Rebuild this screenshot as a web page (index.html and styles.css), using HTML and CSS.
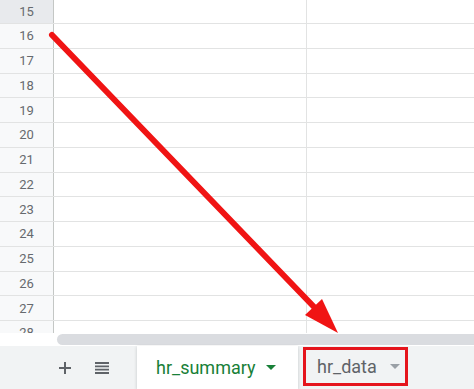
FILE: index.html
```html
<!DOCTYPE html>
<html lang="en">
<head>
  <meta charset="UTF-8" />
  <meta name="viewport" content="width=device-width, initial-scale=1.0">
  <title>Sheet tabs</title>
  <link rel="stylesheet" href="styles.css">
</head>
<body>

  <div class="sheet">
    <!-- Grid rows -->
    <div class="grid">
      <div class="row first selected"><div class="num">15</div><div class="cell"></div><div class="cell"></div></div>
      <div class="row"><div class="num">16</div><div class="cell"></div><div class="cell"></div></div>
      <div class="row"><div class="num">17</div><div class="cell"></div><div class="cell"></div></div>
      <div class="row"><div class="num">18</div><div class="cell"></div><div class="cell"></div></div>
      <div class="row"><div class="num">19</div><div class="cell"></div><div class="cell"></div></div>
      <div class="row"><div class="num">20</div><div class="cell"></div><div class="cell"></div></div>
      <div class="row"><div class="num">21</div><div class="cell"></div><div class="cell"></div></div>
      <div class="row"><div class="num">22</div><div class="cell"></div><div class="cell"></div></div>
      <div class="row"><div class="num">23</div><div class="cell"></div><div class="cell"></div></div>
      <div class="row"><div class="num">24</div><div class="cell"></div><div class="cell"></div></div>
      <div class="row"><div class="num">25</div><div class="cell"></div><div class="cell"></div></div>
      <div class="row"><div class="num">26</div><div class="cell"></div><div class="cell"></div></div>
      <div class="row"><div class="num">27</div><div class="cell"></div><div class="cell"></div></div>
      <div class="row"><div class="num">28</div><div class="cell"></div><div class="cell"></div></div>
    </div>

    <!-- Horizontal scrollbar -->
    <div class="scroll">
      <div class="scroll-corner"></div>
      <div class="thumb"></div>
    </div>

    <!-- Sheet tabs bar -->
    <div class="tabbar">
      <div class="tools">
        <span class="tool">
          <svg width="14" height="14" viewBox="0 0 14 14"><path d="M7 1v12M1 7h12" stroke="#5f6368" stroke-width="2"/></svg>
        </span>
        <span class="tool">
          <svg width="14" height="12" viewBox="0 0 14 12"><path d="M0 1h14M0 4.3h14M0 7.6h14M0 11h14" stroke="#5f6368" stroke-width="1.8"/></svg>
        </span>
      </div>
      <div class="tab active">hr_summary <span class="caret"></span></div>
      <div class="tab marked">hr_data <span class="caret"></span></div>
    </div>

    <!-- Annotation arrow -->
    <svg class="arrow" width="474" height="389" viewBox="0 0 474 389">
      <line x1="52" y1="35" x2="316" y2="309" stroke="#f01414" stroke-width="6" stroke-linecap="round"/>
      <polygon points="338,333 305,315 322,299" fill="#f01414"/>
    </svg>
  </div>

</body>
</html>
```

FILE: styles.css
```css
body {
  margin: 0;
  font-family: Roboto, "Liberation Sans", Arial, sans-serif;
  background: #fff;
}

.sheet {
  position: relative;
  width: 474px;
  height: 389px;
  overflow: hidden;
}

.grid {
  height: 333px;
  overflow: hidden;
}

.row {
  display: flex;
  height: 24.75px;
  box-sizing: border-box;
  border-bottom: 1px solid #e2e3e3;
}

.row.first {
  height: 24px;
}

.num {
  width: 53px;
  flex: none;
  background: #f8f9fa;
  border-right: 1px solid #c4c7c5;
  color: #666a6e;
  font-size: 13px;
  display: flex;
  align-items: center;
  justify-content: center;
}

.row.selected .num {
  background: #e8eaed;
}

.cell {
  width: 252px;
  flex: none;
  border-right: 1px solid #e2e3e3;
}

.cell + .cell {
  width: auto;
  flex: 1;
  border-right: none;
}

.scroll {
  display: flex;
  height: 13px;
  align-items: center;
  background: #fff;
}

.scroll-corner {
  width: 57px;
  flex: none;
}

.thumb {
  flex: 1;
  height: 11px;
  background: #dadce0;
  border-radius: 6px 0 0 6px;
}

.tabbar {
  display: flex;
  align-items: stretch;
  height: 43px;
  background: #f1f3f4;
}

.tools {
  width: 137px;
  flex: none;
  display: flex;
  align-items: center;
  padding-left: 57px;
  box-sizing: border-box;
  gap: 21px;
}

.tool {
  display: flex;
  align-items: center;
  justify-content: center;
  width: 16px;
}

.tab {
  display: flex;
  align-items: center;
  font-size: 18px;
  color: #5f6368;
  box-sizing: border-box;
}

.tab.active {
  width: 161px;
  background: #fff;
  color: #188038;
  padding-left: 19px;
  box-shadow: 0 1px 3px rgba(60,64,67,0.25);
}

.tab.marked {
  margin: 1px 0 3px 5px;
  width: 105px;
  border: 3px solid #e5141c;
  padding-left: 11px;
}

.caret {
  display: inline-block;
  margin-left: 11px;
  width: 0;
  height: 0;
  border-left: 5px solid transparent;
  border-right: 5px solid transparent;
  border-top: 5px solid currentColor;
}

.tab.marked .caret {
  border-top-color: #9aa0a6;
  margin-left: 13px;
}

.arrow {
  position: absolute;
  left: 0;
  top: 0;
  pointer-events: none;
}
```
